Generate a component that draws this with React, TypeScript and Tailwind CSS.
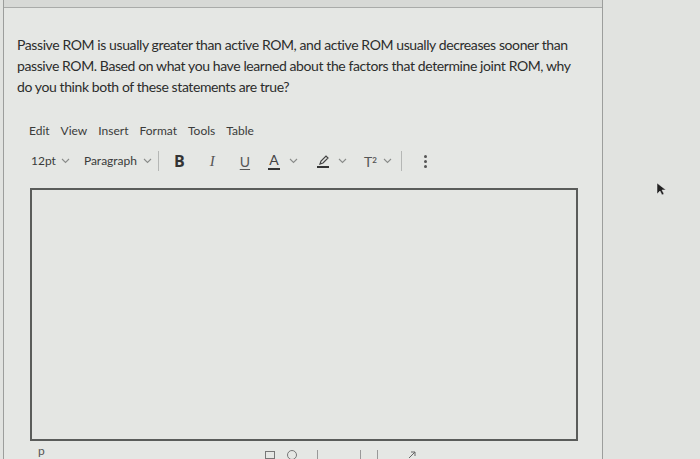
import React from "react";

const Chevron = () => (
  <svg width="9" height="6" viewBox="0 0 9 6" className="text-[#8a8c8a]">
    <path d="M1 1l3.5 3.5L8 1" fill="none" stroke="currentColor" strokeWidth="1.1" />
  </svg>
);

export default function App() {
  return (
    <div
      className="w-[700px] h-[459px] overflow-hidden bg-[#e1e3e0] flex text-[#2f302f]"
      style={{ fontFamily: "Lato, 'Open Sans', sans-serif" }}
    >
      <div className="ml-[3px] w-[600px] h-full bg-[#e5e7e4] border-l border-r border-[#9c9e9c] flex flex-col">
        <div className="h-[8px] bg-[#d7d9d6] border-b border-[#a9aba9] shrink-0" />
        <p className="pl-[13px] pt-[26px] text-[14px] leading-[21px] tracking-[-0.4px] text-[#2c2d2c] whitespace-nowrap">
          Passive ROM is usually greater than active ROM, and active ROM usually decreases sooner than
          <br />
          passive ROM. Based on what you have learned about the factors that determine joint ROM, why
          <br />
          do you think both of these statements are true?
        </p>

        <div className="flex gap-[11px] pl-[25px] mt-[26px] text-[12px] leading-[16px] text-[#3a3b3a]">
          <span>Edit</span>
          <span>View</span>
          <span>Insert</span>
          <span>Format</span>
          <span>Tools</span>
          <span>Table</span>
        </div>

        <div className="flex items-center pl-[27px] mt-[12px] h-[20px] text-[12px] text-[#3a3b3a]">
          <span>12pt</span>
          <span className="ml-[5px]"><Chevron /></span>
          <span className="ml-[14px]">Paragraph</span>
          <span className="ml-[6px]"><Chevron /></span>
          <span className="ml-[6px] w-px h-[20px] bg-[#b5b7b5]" />
          <span className="ml-[15px] font-bold text-[16px] text-[#333]" style={{ fontFamily: "'Open Sans', sans-serif" }}>B</span>
          <span className="ml-[25px] italic text-[15px] text-[#555]" style={{ fontFamily: "'Liberation Serif', serif" }}>I</span>
          <span className="ml-[25px] underline text-[14px] text-[#555] decoration-1 underline-offset-2">U</span>
          <span className="ml-[18px] flex flex-col items-center text-[14px] leading-[14px] text-[#444]">
            A
            <span className="w-[12px] h-[2px] bg-[#333] mt-[1px]" />
          </span>
          <span className="ml-[9px]"><Chevron /></span>
          <span className="ml-[19px] flex flex-col items-center">
            <svg width="12" height="11" viewBox="0 0 12 11">
              <path d="M3 9l1-3 5-5 2 2-5 5z" fill="none" stroke="#444" strokeWidth="1.2" />
            </svg>
            <span className="w-[12px] h-[2px] bg-[#333]" />
          </span>
          <span className="ml-[9px]"><Chevron /></span>
          <span className="ml-[17px] text-[14px] text-[#555]">
            T<sup className="text-[8px] font-bold">2</sup>
          </span>
          <span className="ml-[6px]"><Chevron /></span>
          <span className="ml-[9px] w-px h-[20px] bg-[#b5b7b5]" />
          <span className="ml-[22px] flex flex-col gap-[2px]">
            <span className="w-[3px] h-[3px] rounded-full bg-[#555]" />
            <span className="w-[3px] h-[3px] rounded-full bg-[#555]" />
            <span className="w-[3px] h-[3px] rounded-full bg-[#555]" />
          </span>
        </div>

        <div className="ml-[26px] mt-[17px] w-[548px] h-[253px] border-2 border-[#5a5c5a] bg-[#e4e6e3] shrink-0" />

        <div className="flex items-start pl-[34px] mt-[2px] text-[12px] leading-[16px] text-[#555]">
          <span>p</span>
          <div className="ml-[220px] mt-[7px] flex items-center gap-[12px]">
            <span className="w-[10px] h-[8px] border border-[#777]" />
            <span className="w-[10px] h-[10px] rounded-full border border-[#777]" />
            <span className="w-px h-[10px] bg-[#999] ml-[8px]" />
            <span className="w-px h-[10px] bg-[#999] ml-[30px]" />
            <span className="w-px h-[10px] bg-[#999] ml-[4px]" />
            <svg className="ml-[18px]" width="8" height="8" viewBox="0 0 8 8">
              <path d="M1 7L7 1M3 1h4v4" fill="none" stroke="#666" strokeWidth="1" />
            </svg>
          </div>
        </div>
      </div>

      <div className="relative flex-1">
        <svg className="absolute left-[53px] top-[182px]" width="11" height="14" viewBox="0 0 11 14">
          <path d="M1 1v11l3-3 2 4 2-1-2-4h4z" fill="#222" stroke="#eee" strokeWidth="0.5" />
        </svg>
      </div>
    </div>
  );
}
